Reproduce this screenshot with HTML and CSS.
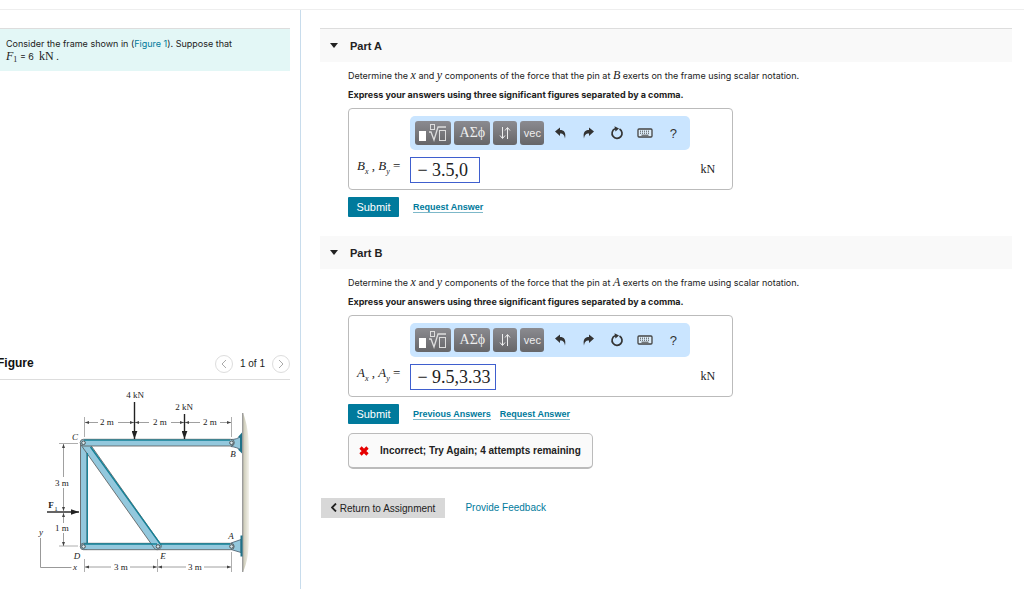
FILE: index.html
```html
<!DOCTYPE html>
<html lang="en">
<head>
  <meta charset="UTF-8" />
  <meta name="viewport" content="width=device-width, initial-scale=1.0"/>
  <title>Frame Problem</title>
  <link rel="stylesheet" href="styles.css">
</head>
<body>
  <!-- shared icons -->
  <svg class="sprite" aria-hidden="true">
    <symbol id="icon-template" viewBox="0 0 30 20">
      <rect x="1" y="8" width="7" height="10" fill="#fff"/>
      <rect x="12.500" y="1.500" width="4" height="5" fill="none" stroke="#ddd"/>
      <path d="M11 9l2 0 3 8 4-13h8" fill="none" stroke="#ddd" stroke-width="1.300"/>
      <rect x="21.500" y="7.500" width="6" height="10" fill="none" stroke="#ddd"/>
    </symbol>
    <symbol id="icon-updown" viewBox="0 0 12 14">
      <path d="M3.500 1v11M1 9.500l2.500 3L6 9.500M8.500 13V2M6 4.500l2.500-3 2.500 3" fill="none" stroke="#eee"/>
    </symbol>
    <symbol id="icon-undo" viewBox="0 0 12 12">
      <path d="M0 4.500L5 .5V3c4 0 6.300 2.500 5 8.500C9.500 8.500 8.500 6.500 5 6.500V9z" fill="#333"/>
    </symbol>
    <symbol id="icon-redo" viewBox="0 0 12 12">
      <path d="M11 4.500L6 .5V3C2 3-.3 5.500 1 11.500 1.500 8.500 2.500 6.500 6 6.500V9z" fill="#333"/>
    </symbol>
    <symbol id="icon-reset" viewBox="0 0 14 14">
      <path d="M9.500 3A5 5 0 1 1 5 2.800" fill="none" stroke="#333" stroke-width="1.700"/>
      <path d="M4.500 .2L9 2.500 5.500 5.500z" fill="#333"/>
    </symbol>
    <symbol id="icon-keyboard" viewBox="0 0 16 10">
      <rect x="1" y="1" width="14" height="8" rx="1" fill="#dcecf8" stroke="#444" stroke-width="1.300"/>
      <path d="M3 3.200h10M3 5.200h10" stroke="#444" stroke-dasharray="1 1"/>
      <path d="M4.500 7.200h7" stroke="#444"/>
    </symbol>
  </svg>

  <div class="page">
    <aside class="sidebar">
      <div class="statement">
        Consider the frame shown in (<a href="#figure">Figure 1</a>). Suppose that<br>
        <span class="math"><i>F</i><sub>1</sub></span> = 6 &nbsp;<span class="math">kN</span> .
      </div>

      <section class="figure" id="figure">
        <div class="figure-header">
          <h2>Figure</h2>
          <div class="pager">
            <button type="button" aria-label="Previous figure">
              <svg width="6" height="8" viewBox="0 0 6 8"><path d="M5 0L1 4l4 4" fill="none" stroke="#aaa"/></svg>
            </button>
            <span>1 of 1</span>
            <button type="button" aria-label="Next figure">
              <svg width="6" height="8" viewBox="0 0 6 8"><path d="M1 0l4 4-4 4" fill="none" stroke="#aaa"/></svg>
            </button>
          </div>
        </div>

        <svg class="drawing" viewBox="0 0 290 209" role="img" aria-label="Frame with members CB, CD, CE and DA">
          <defs>
            <linearGradient id="wall">
              <stop offset="0" stop-color="#c9c7b3"/>
              <stop offset="1" stop-color="#f4f3ec"/>
            </linearGradient>
            <marker id="dim" viewBox="0 0 4 4" refX="4" refY="2" markerWidth="4" markerHeight="4" markerUnits="userSpaceOnUse" orient="auto">
              <path d="M0 .5L4 2 0 3.500z" fill="#444"/>
            </marker>
            <marker id="force" viewBox="0 0 7 5" refX="7" refY="2.500" markerWidth="8" markerHeight="6" markerUnits="userSpaceOnUse" orient="auto">
              <path d="M0 0L7 2.500 0 5z" fill="#222"/>
            </marker>
          </defs>

          <!-- wall -->
          <path d="M243 33c4 10 6 22 6 40v80c0 20-2 30-6 39z" fill="url(#wall)"/>
          <path d="M242.700 33v159" stroke="#999" stroke-width="1.300"/>

          <!-- supports -->
          <g fill="#93c8dd" stroke="#456" stroke-width=".8">
            <path d="M231 59.500c4 0 7-1 10-3.500V70c-3-2-6-3-10-3.500z"/>
            <path d="M231 163l10-3.500v13L231 169.500z"/>
          </g>
          <path d="M238 57l4-4.500v21l-4-4 2-1V58zM240.500 155.500h2v21h-2z" fill="#1f7288"/>

          <!-- members -->
          <g fill="#93c8dd" stroke="#555" stroke-width=".8">
            <path d="M80.500 63v103a3 3 0 0 0 3 3.500H87V63z"/>
            <path d="M83.500 163.300H231a3.200 3.200 0 0 1 0 6.400H83.500a3.200 3.200 0 0 1 0-6.400z"/>
            <path d="M81 65l73.500 103.500c3 3 8 0 6.500-4L88.500 62z"/>
            <path d="M83.500 59.300H231a3.300 3.300 0 0 1 0 6.700H83.500a3.300 3.300 0 0 1 0-6.700z"/>
          </g>
          <g fill="none" stroke="#148196" stroke-width="1.300">
            <path d="M87.300 73v90M84 60.200h146M84 164h73M161 164h69M90.500 67L161 165"/>
          </g>
          <g fill="#d9e8ee" stroke="#444" stroke-width=".9">
            <circle cx="83.500" cy="62.800" r="1.800"/>
            <circle cx="231.500" cy="62.800" r="1.800"/>
            <circle cx="83.500" cy="166.500" r="1.800"/>
            <circle cx="158" cy="166.500" r="1.800"/>
            <circle cx="231.500" cy="166.500" r="1.800"/>
          </g>

          <!-- dimension lines -->
          <g fill="none" stroke="#999" stroke-width=".8">
            <path d="M84.500 37v20M231.500 37v20M84.500 179v13M157.500 179v13M231.500 172v20M59 63.500h19M59 166h19"/>
            <path d="M40.500 158v29.500h31" stroke-width="1"/>
          </g>
          <g fill="none" stroke="#888" stroke-width=".8">
            <path d="M98 42.500H85" marker-end="url(#dim)"/>
            <path d="M118 42.500h16" marker-end="url(#dim)"/>
            <path d="M149 42.500h-14" marker-end="url(#dim)"/>
            <path d="M171 42.500h13" marker-end="url(#dim)"/>
            <path d="M200 42.500h-15" marker-end="url(#dim)"/>
            <path d="M220 42.500h11" marker-end="url(#dim)"/>
            <path d="M111 187H85" marker-end="url(#dim)"/>
            <path d="M130 187h27" marker-end="url(#dim)"/>
            <path d="M186 187h-28" marker-end="url(#dim)"/>
            <path d="M204 187h27" marker-end="url(#dim)"/>
            <path d="M63.500 97V64" marker-end="url(#dim)"/>
            <path d="M63.500 108v23" marker-end="url(#dim)"/>
            <path d="M63.500 143v-10" marker-end="url(#dim)"/>
            <path d="M63.500 153v13" marker-end="url(#dim)"/>
          </g>

          <!-- forces -->
          <g stroke="#222" stroke-width="1.400">
            <path d="M134.500 22v37" marker-end="url(#force)"/>
            <path d="M184.500 34v25" marker-end="url(#force)"/>
            <path d="M47 132h32" marker-end="url(#force)"/>
          </g>

          <g class="labels">
            <text x="135" y="18">4 kN</text>
            <text x="184" y="30">2 kN</text>
            <text x="107" y="45">2 m</text>
            <text x="160" y="45">2 m</text>
            <text x="210" y="45">2 m</text>
            <text x="62" y="106">3 m</text>
            <text x="62" y="151">1 m</text>
            <text x="121" y="190">3 m</text>
            <text x="195" y="190">3 m</text>
            <text x="51" y="128" class="bold">F</text>
            <text x="56" y="131" class="index">1</text>
          </g>
          <g class="labels points">
            <text x="75" y="60">C</text>
            <text x="233" y="77">B</text>
            <text x="77" y="179">D</text>
            <text x="163" y="179">E</text>
            <text x="231" y="159">A</text>
            <text x="41" y="155">y</text>
            <text x="75" y="190">x</text>
          </g>
        </svg>
      </section>
    </aside>

    <main class="content">
      <section class="part">
        <h2 class="part-header part-first"><span class="arrow"></span>Part A</h2>
        <form class="part-body" onsubmit="return false;">
          <p>Determine the <i class="math">x</i> and <i class="math">y</i> components of the force that the pin at <i class="math">B</i> exerts on the frame using scalar notation.</p>
          <p><b>Express your answers using three significant figures separated by a comma.</b></p>
          <div class="answer-box">
            <div class="toolbar">
              <button type="button" class="tool wide" aria-label="Templates"><svg width="30" height="20"><use href="#icon-template"/></svg></button>
              <button type="button" class="tool wide greek">ΑΣϕ</button>
              <button type="button" class="tool" aria-label="Subscripts"><svg width="12" height="14"><use href="#icon-updown"/></svg></button>
              <button type="button" class="tool">vec</button>
              <button type="button" class="action" aria-label="Undo"><svg width="12" height="12"><use href="#icon-undo"/></svg></button>
              <button type="button" class="action" aria-label="Redo"><svg width="12" height="12"><use href="#icon-redo"/></svg></button>
              <button type="button" class="action" aria-label="Reset"><svg width="14" height="14"><use href="#icon-reset"/></svg></button>
              <button type="button" class="action" aria-label="Keyboard"><svg width="16" height="10"><use href="#icon-keyboard"/></svg></button>
              <button type="button" class="action">?</button>
            </div>
            <label for="answerA"><i>B<sub>x</sub></i> , <i>B<sub>y</sub></i> =</label>
            <input type="text" id="answerA" class="short" value="− 3.5,0" />
            <span class="unit">kN</span>
          </div>
          <div class="buttons">
            <button type="submit" class="submit">Submit</button>
            <a href="#">Request Answer</a>
          </div>
        </form>
      </section>

      <section class="part">
        <h2 class="part-header"><span class="arrow"></span>Part B</h2>
        <form class="part-body" onsubmit="return false;">
          <p>Determine the <i class="math">x</i> and <i class="math">y</i> components of the force that the pin at <i class="math">A</i> exerts on the frame using scalar notation.</p>
          <p><b>Express your answers using three significant figures separated by a comma.</b></p>
          <div class="answer-box">
            <div class="toolbar">
              <button type="button" class="tool wide" aria-label="Templates"><svg width="30" height="20"><use href="#icon-template"/></svg></button>
              <button type="button" class="tool wide greek">ΑΣϕ</button>
              <button type="button" class="tool" aria-label="Subscripts"><svg width="12" height="14"><use href="#icon-updown"/></svg></button>
              <button type="button" class="tool">vec</button>
              <button type="button" class="action" aria-label="Undo"><svg width="12" height="12"><use href="#icon-undo"/></svg></button>
              <button type="button" class="action" aria-label="Redo"><svg width="12" height="12"><use href="#icon-redo"/></svg></button>
              <button type="button" class="action" aria-label="Reset"><svg width="14" height="14"><use href="#icon-reset"/></svg></button>
              <button type="button" class="action" aria-label="Keyboard"><svg width="16" height="10"><use href="#icon-keyboard"/></svg></button>
              <button type="button" class="action">?</button>
            </div>
            <label for="answerB"><i>A<sub>x</sub></i> , <i>A<sub>y</sub></i> =</label>
            <input type="text" id="answerB" class="long" value="− 9.5,3.33" />
            <span class="unit">kN</span>
          </div>
          <div class="buttons">
            <button type="submit" class="submit">Submit</button>
            <a href="#">Previous Answers</a>
            <a href="#">Request Answer</a>
          </div>
          <div class="feedback">
            <svg width="10" height="10" viewBox="0 0 10 10"><path d="M1.500 1.500l7 7M8.500 1.500l-7 7" stroke="#e60000" stroke-width="3.200"/></svg>
            Incorrect; Try Again; 4 attempts remaining
          </div>
        </form>
      </section>

      <div class="footer">
        <button type="button" class="return">
          <svg width="6" height="9" viewBox="0 0 6 9"><path d="M5 .5l-4 4 4 4" fill="none" stroke="#222" stroke-width="1.800"/></svg>
          Return to Assignment
        </button>
        <a href="#">Provide Feedback</a>
      </div>
    </main>
  </div>
</body>
</html>
```
FILE: styles.css
```css
* {
  box-sizing: border-box;
}
body {
  margin: 0;
  padding-top: 9px;
  min-height: 100vh;
  display: flex;
  flex-direction: column;
  background: #fff;
  color: #222;
  font-family: "Liberation Sans", Arial, sans-serif;
  font-size: 10px;
  line-height: 12px;
}
button {
  font-family: inherit;
  border: none;
  padding: 0;
  cursor: pointer;
}
a {
  color: #007a9c;
  text-decoration: none;
}
.sprite {
  display: none;
}
.page {
  flex: 1;
  display: flex;
  border-top: 1px solid #eee;
}
.math {
  font-family: "Liberation Serif", serif;
  font-size: 12px;
  line-height: 1;
}
sub {
  font-size: 8px;
  line-height: 1;
}

/* left side */
.sidebar {
  width: 301px;
  flex-shrink: 0;
  display: flex;
  flex-direction: column;
  padding: 18px 10px 0 0;
  border-right: 1px solid #c8dcec;
}
.statement {
  height: 43px;
  padding: 9px 6px;
  background: #e3f7f6;
  border-top: 1px solid #ddd;
}
.statement,
.part-body p {
  font-family: Inter, "Liberation Sans", sans-serif;
  font-size: 9px;
}
.statement sub {
  vertical-align: -2px;
}
.figure {
  margin-top: auto;
}
.figure-header {
  display: flex;
  justify-content: space-between;
  align-items: flex-start;
  height: 25px;
  margin-left: -3px;
  border-bottom: 1px solid #ddd;
}
.figure-header h2 {
  margin: 0;
  padding-top: 2px;
  font-size: 12px;
  color: #111;
}
.pager {
  display: flex;
  align-items: center;
  gap: 7px;
  font-size: 10px;
}
.pager button {
  display: flex;
  align-items: center;
  justify-content: center;
  width: 18px;
  height: 18px;
  background: #fff;
  border: 1px solid #ddd;
  border-radius: 50%;
}
.drawing {
  display: block;
  width: 100%;
}
.labels {
  font-family: "Liberation Serif", serif;
  font-size: 9px;
  text-anchor: middle;
  fill: #222;
}
.points {
  font-style: italic;
}
.bold {
  font-weight: bold;
}
.index {
  font-size: 7px;
}

/* right side */
.content {
  flex: 1;
  padding: 18px 12px 0 19px;
}
.part {
  margin-bottom: 19px;
}
.part-header {
  display: flex;
  align-items: center;
  height: 33px;
  margin: 0;
  padding-left: 10px;
  background: #f9f9f9;
  font-size: 11px;
}
.part-first {
  height: 34px;
  border-top: 1px solid #ddd;
}
.arrow {
  width: 8px;
  margin-right: 12px;
  border: 4px solid transparent;
  border-top: 5px solid #222;
  border-bottom: none;
}
.part-body {
  padding: 7px 0 0 28px;
}
.part-body p {
  margin: 0 0 7px;
}
.answer-box {
  display: inline-grid;
  grid-template-columns: auto 280px auto;
  row-gap: 7px;
  align-items: center;
  padding: 7px 17px 6px 8px;
  border: 1px solid #bbb;
  border-radius: 4px;
  vertical-align: top;
}
.toolbar {
  grid-column: 2;
  display: flex;
  align-items: center;
  height: 34px;
  padding-left: 5px;
  background: #cae5ff;
  border-radius: 5px;
}
.tool {
  display: flex;
  align-items: center;
  justify-content: center;
  width: 24px;
  height: 24px;
  margin-right: 3px;
  background: linear-gradient(#8b8b90, #666669);
  border-radius: 3px;
  color: #eee;
  font-size: 11px;
}
.wide {
  width: 36px;
}
.greek {
  font-family: "Liberation Serif", serif;
  font-size: 14px;
}
.action {
  display: flex;
  align-items: center;
  justify-content: center;
  width: 28px;
  height: 24px;
  background: none;
  color: #333;
  font-size: 13px;
}
.answer-box label {
  grid-column: 1;
  padding: 0 10px 4px 0;
  font-family: "Liberation Serif", serif;
  font-size: 13px;
}
.answer-box input {
  height: 26px;
  padding: 0 4px 0 6px;
  border: 1px solid #3f5fce;
  color: #222;
  font-family: "Liberation Serif", serif;
  font-size: 18px;
}
.answer-box .short {
  width: 70px;
}
.answer-box .long {
  width: 86px;
}
.unit {
  padding: 0 0 2px 10px;
  font-family: "Liberation Serif", serif;
  font-size: 12px;
}
.buttons {
  display: flex;
  align-items: center;
  gap: 9px;
  margin-top: 7px;
}
.submit {
  width: 51px;
  height: 20px;
  margin-right: 5px;
  background: #007a9c;
  border-radius: 1px;
  color: #fff;
  font-size: 11px;
}
.buttons a {
  border-bottom: 1px solid #7db8c9;
  font-size: 9px;
  font-weight: bold;
  line-height: 10px;
}
.feedback {
  display: inline-flex;
  align-items: center;
  gap: 11px;
  height: 36px;
  margin-top: 9px;
  padding: 0 11px 0 10px;
  background: #fafafa;
  border: 1px solid #bbb;
  border-bottom-width: 2px;
  border-radius: 5px;
  font-size: 10px;
  font-weight: bold;
}
.footer {
  display: flex;
  align-items: center;
  gap: 20px;
  margin-top: 29px;
  padding-left: 1px;
  font-size: 10px;
}
.return {
  height: 20px;
  padding: 0 10px;
  background: #d8d8d8;
  color: #222;
  font-size: 10px;
}
```
